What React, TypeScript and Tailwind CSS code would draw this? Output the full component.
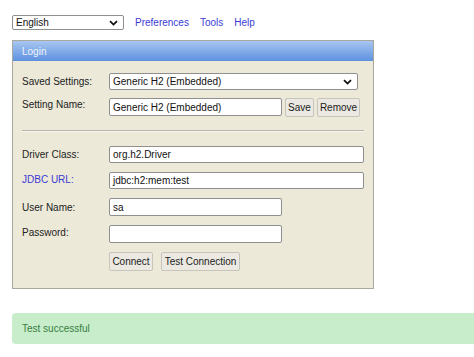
import React from "react";

function Chevron() {
  return (
    <svg width="9" height="6" viewBox="0 0 9 6" className="shrink-0">
      <path d="M1 1.2 L4.5 4.6 L8 1.2" fill="none" stroke="#111" strokeWidth="1.8" />
    </svg>
  );
}

function Select({ value, className }: { value: string; className: string }) {
  return (
    <div
      className={`flex items-center justify-between bg-white border border-[#8f8f8f] rounded-[2px] pl-[3px] pr-[5px] text-[10px] text-[#111] ${className}`}
    >
      <span>{value}</span>
      <Chevron />
    </div>
  );
}

function Input({ value, className }: { value?: string; className: string }) {
  return (
    <div
      className={`flex items-center bg-white border border-[#8f8f8f] rounded-[2px] pl-[3px] text-[10px] text-[#111] ${className}`}
    >
      {value}
    </div>
  );
}

function Btn({ label, className }: { label: string; className: string }) {
  return (
    <div
      className={`flex items-center justify-center bg-[#ebe9e1] border border-[#c6c4bb] rounded-[2px] text-[10px] text-[#222] ${className}`}
    >
      {label}
    </div>
  );
}

function Row({
  label,
  children,
  className,
  blue,
  labelClass = "",
}: {
  label: string;
  children: React.ReactNode;
  className: string;
  blue?: boolean;
  labelClass?: string;
}) {
  return (
    <div className={`flex items-center ${className}`}>
      <div className={`w-[87px] shrink-0 text-[10px] ${blue ? "text-[#3b3bd4]" : "text-[#222]"} ${labelClass}`}>{label}</div>
      {children}
    </div>
  );
}

export default function App() {
  return (
    <div
      className="w-[474px] h-[357px] overflow-hidden bg-white"
      style={{ fontFamily: '"Liberation Sans", Arial, sans-serif' }}
    >
      <div className="flex items-center pt-[15px] pl-[12px] h-[30px]">
        <Select value="English" className="w-[112px] h-[15px]" />
        <div className="flex items-center gap-[11px] ml-[11px] text-[10px] text-[#3b3bd4]">
          <span>Preferences</span>
          <span>Tools</span>
          <span>Help</span>
        </div>
      </div>

      <div className="ml-[12px] mt-[10px] w-[362px] border border-[#a9a79e] bg-[#ece9d8]">
        <div className="h-[20px] flex items-center pl-[9px] text-[10px] text-[#eef3fc] bg-[linear-gradient(#a8c6f1,#5d91de)]">
          Login
        </div>
        <div className="pl-[9px] pr-[9px] pb-[17px]">
          <Row label="Saved Settings:" className="mt-[12px] h-[17px]">
            <Select value="Generic H2 (Embedded)" className="w-[249px] h-[17px]" />
          </Row>
          <Row label="Setting Name:" labelClass="-mt-[5px]" className="mt-[8px] h-[18px]">
            <Input value="Generic H2 (Embedded)" className="w-[173px] h-[18px]" />
            <Btn label="Save" className="ml-[3px] w-[29px] h-[19px]" />
            <Btn label="Remove" className="ml-[3px] w-[43px] h-[19px]" />
          </Row>
          <div className="mt-[14px] h-[2px] border-t border-[#b5b3aa] border-b border-b-[#f7f6f0]" />
          <Row label="Driver Class:" className="mt-[14px] h-[17px]">
            <Input value="org.h2.Driver" className="w-[256px] h-[17px]" />
          </Row>
          <Row label="JDBC URL:" blue labelClass="-mt-[3px]" className="mt-[9px] h-[17px]">
            <Input value="jdbc:h2:mem:test" className="w-[256px] h-[17px]" />
          </Row>
          <Row label="User Name:" className="mt-[9px] h-[18px]">
            <Input value="sa" className="w-[173px] h-[18px]" />
          </Row>
          <Row label="Password:" labelClass="-mt-[4px]" className="mt-[9px] h-[18px]">
            <Input className="w-[173px] h-[18px]" />
          </Row>
          <div className="flex items-center mt-[9px] h-[19px] pl-[87px] gap-[8px]">
            <Btn label="Connect" className="w-[44px] h-[19px]" />
            <Btn label="Test Connection" className="w-[79px] h-[19px]" />
          </div>
        </div>
      </div>

      <div className="ml-[12px] mt-[24px] w-[500px] h-[31px] rounded-[4px] bg-[#c7edcb] flex items-center pl-[10px] text-[10px] text-[#3a7d40]">
        Test successful
      </div>
    </div>
  );
}
